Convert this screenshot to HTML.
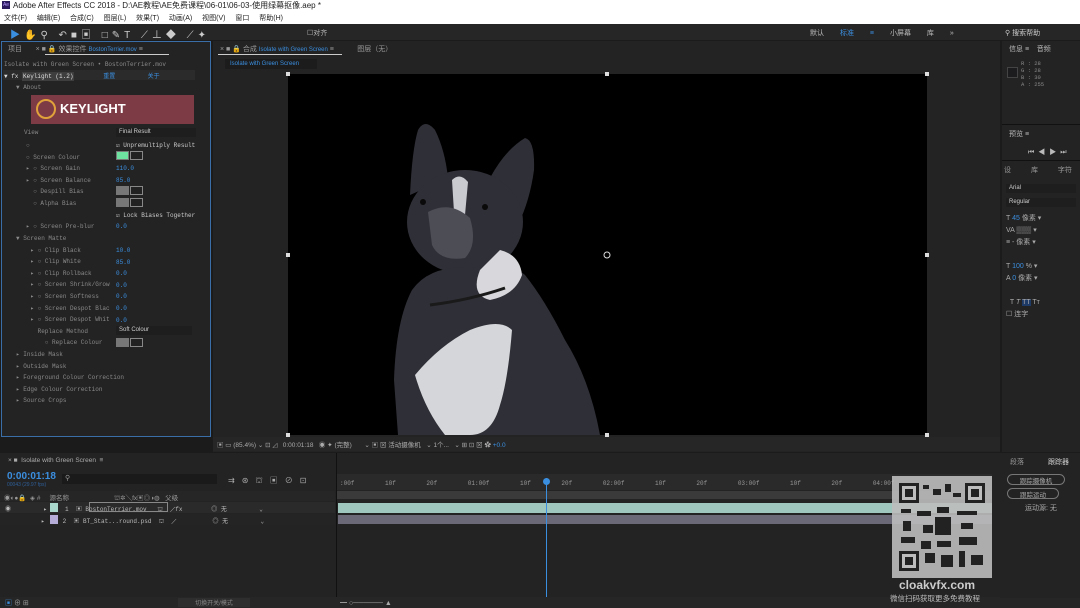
<!DOCTYPE html>
<html><head><meta charset="utf-8">
<style>
*{margin:0;padding:0;box-sizing:border-box}
body{width:1080px;height:608px;overflow:hidden;background:#1b1b1b;font-family:"Liberation Sans","Noto Sans CJK SC",sans-serif;font-size:7px;color:#9a9a9a;position:relative}
.a{position:absolute}
.m{font-family:"Liberation Mono","Noto Sans CJK SC",monospace;font-size:6px;color:#8a8a8a;white-space:nowrap}
.b{color:#3b8fe0}
.sw{width:13px;height:9px;border:1px solid #777}
.ey{width:13px;height:9px;background:#222;border:1px solid #888}
.dd{background:#1e1e1e;color:#ccc;height:9px;font-size:6px;padding-left:3px;line-height:9px}
</style></head><body>
<div class="a" style="left:0;top:0;width:1080px;height:24px;background:#fff"></div>
<div class="a" style="left:2px;top:1px;width:8px;height:8px;background:#2b1a5e;color:#b79bff;font-size:5px;line-height:8px;text-align:center">Ae</div>
<div class="a" style="left:13px;top:0;font-size:8px;color:#222;white-space:nowrap">Adobe After Effects CC 2018 - D:\AE教程\AE免费课程\06-01\06-03-使用绿幕抠像.aep *</div>
<div class="a" style="left:4px;top:13px;font-size:7px;color:#222;white-space:nowrap;word-spacing:3px">文件(F) &nbsp;编辑(E) &nbsp;合成(C) &nbsp;图层(L) &nbsp;效果(T) &nbsp;动画(A) &nbsp;视图(V) &nbsp;窗口 &nbsp;帮助(H)</div>
<div class="a" style="left:0;top:24px;width:1080px;height:16px;background:#262626"></div>
<div class="a" style="left:10px;top:26px;font-size:10px;color:#ccc;white-space:nowrap;letter-spacing:4px"><span style="color:#3b8fe0">▶</span>✋⚲ ↶■▣ □✎T ⟋⊥◆ ⟋✦</div>
<div class="a" style="left:307px;top:28px;font-size:7px;color:#bbb">☐对齐</div>
<div class="a" style="left:810px;top:28px;font-size:7px;color:#bbb;white-space:nowrap;word-spacing:14px">默认 <span class="b">标准</span> <span class="b">≡</span> 小屏幕 库 »</div>
<div class="a" style="left:1005px;top:28px;font-size:7px;color:#ccc">⚲ 搜索帮助</div>
<div class="a" style="left:1px;top:41px;width:210px;height:396px;background:#232323;border:1px solid #3a6ea8"></div>
<div class="a" style="left:8px;top:44px;font-size:7px;color:#999;white-space:nowrap">项目 &nbsp; &nbsp; &nbsp; × ■ 🔒 效果控件 <span class="b" style="font-size:6px">BostonTerrier.mov</span> ≡</div>
<div class="a" style="left:45px;top:54px;width:124px;height:1px;background:#ccc"></div>
<div class="a m" style="left:4px;top:61px">Isolate with Green Screen • BostonTerrier.mov</div>
<div class="a" style="left:3px;top:70px;width:192px;height:10px;background:#2b2b2b"></div>
<div class="a m" style="left:4px;top:71px;color:#ddd">▼ fx <span style="background:#3e3e3e;padding:1px">Keylight (1.2)</span> &nbsp; &nbsp; &nbsp; &nbsp;<span class="b">重置</span> &nbsp; &nbsp; &nbsp; &nbsp; <span class="b">关于</span></div>
<div class="a m" style="left:16px;top:84px">▼ About</div>
<div class="a" style="left:31px;top:95px;width:163px;height:29px;background:#7d3b45"></div>
<div class="a" style="left:36px;top:99px;width:20px;height:20px;border:2px solid #e0a23a;border-radius:50%"></div>
<div class="a" style="left:60px;top:101px;font-size:13px;font-weight:bold;color:#fff">KEYLIGHT</div>
<div class="a m" style="left:24px;top:129px">View</div>
<div class="a dd" style="left:116px;top:128px;width:80px">Final Result</div>
<div class="a m" style="left:26px;top:140px;line-height:11.6px">
○<br>○ Screen Colour<br>▸ ○ Screen Gain<br>▸ ○ Screen Balance<br>&nbsp; ○ Despill Bias<br>&nbsp; ○ Alpha Bias<br><br>▸ ○ Screen Pre-blur<br></div>
<div class="a m" style="left:116px;top:140px;line-height:11.6px"><span style="color:#ccc">☑ Unpremultiply Result</span><br><br><span class="b">110.0</span><br><span class="b">85.0</span><br><br><br><span style="color:#ccc">☑ Lock Biases Together</span><br><span class="b">0.0</span></div>
<div class="a sw" style="left:116px;top:151px;background:#6ee0a0"></div><div class="a ey" style="left:130px;top:151px"></div>
<div class="a sw" style="left:116px;top:186px;background:#777"></div><div class="a ey" style="left:130px;top:186px"></div>
<div class="a sw" style="left:116px;top:198px;background:#777"></div><div class="a ey" style="left:130px;top:198px"></div>
<div class="a m" style="left:16px;top:233px;line-height:11.6px">▼ Screen Matte<br>&nbsp; &nbsp; ▸ ○ Clip Black<br>&nbsp; &nbsp; ▸ ○ Clip White<br>&nbsp; &nbsp; ▸ ○ Clip Rollback<br>&nbsp; &nbsp; ▸ ○ Screen Shrink/Grow<br>&nbsp; &nbsp; ▸ ○ Screen Softness<br>&nbsp; &nbsp; ▸ ○ Screen Despot Blac<br>&nbsp; &nbsp; ▸ ○ Screen Despot Whit<br>&nbsp; &nbsp; &nbsp; Replace Method<br>&nbsp; &nbsp; &nbsp; &nbsp; ○ Replace Colour<br>▸ Inside Mask<br>▸ Outside Mask<br>▸ Foreground Colour Correction<br>▸ Edge Colour Correction<br>▸ Source Crops</div>
<div class="a m b" style="left:116px;top:245px;line-height:11.6px">10.0<br>85.0<br>0.0<br>0.0<br>0.0<br>0.0<br>0.0</div>
<div class="a dd" style="left:116px;top:326px;width:76px">Soft Colour</div>
<div class="a sw" style="left:116px;top:338px;background:#777"></div><div class="a ey" style="left:130px;top:338px"></div>
<div class="a" style="left:213px;top:41px;width:787px;height:411px;background:#232323"></div>
<div class="a" style="left:220px;top:44px;font-size:7px;color:#999;white-space:nowrap">× ■ 🔒 合成 <span class="b" style="font-size:6px">Isolate with Green Screen</span> ≡ &nbsp; &nbsp; &nbsp; &nbsp; &nbsp; &nbsp;图层（无）</div>
<div class="a" style="left:218px;top:54px;width:124px;height:1px;background:#ccc"></div>
<div class="a" style="left:225px;top:59px;width:92px;height:10px;background:#1c1c1c;font-size:6px;color:#3b8fe0;padding:2px 0 0 5px">Isolate with Green Screen</div>
<div class="a" style="left:288px;top:74px;width:639px;height:361px;background:#000"></div>
<svg class="a" style="left:0;top:0" width="1080" height="608">
<g fill="#ddd"><rect x="286" y="72" width="4" height="4"/><rect x="605" y="72" width="4" height="4"/><rect x="925" y="72" width="4" height="4"/><rect x="286" y="253" width="4" height="4"/><rect x="925" y="253" width="4" height="4"/><rect x="286" y="433" width="4" height="4"/><rect x="605" y="433" width="4" height="4"/><rect x="925" y="433" width="4" height="4"/></g>
<circle cx="607" cy="255" r="3" fill="none" stroke="#ddd"/>
<g fill="#2f2f37">
<path d="M410 195 Q412 150 418 130 Q425 118 435 130 Q445 150 448 178 Z"/>
<path d="M490 178 Q505 150 525 138 Q535 140 534 170 Q530 200 518 225 Z"/>
<ellipse cx="465" cy="222" rx="58" ry="52"/>
<path d="M398 435 L394 380 Q396 320 412 290 Q430 265 470 268 Q515 265 525 275 Q545 300 565 340 Q590 380 600 435 Z"/>
</g>
<path d="M452 180 Q460 172 468 182 L465 215 Q458 228 454 212 Z" fill="#c9c9d0"/>
<path d="M428 212 Q450 200 470 218 Q478 245 465 258 Q440 262 432 245 Z" fill="#4d4d56"/>
<path d="M500 250 Q520 255 522 275 Q515 295 490 300 Q470 295 480 270 Z" fill="#d8d8dc"/>
<path d="M415 375 Q440 345 470 330 Q500 318 512 330 Q508 380 500 405 Q492 435 470 435 L445 435 Q425 410 415 375Z" fill="#d4d6da"/>
<circle cx="423" cy="202" r="3" fill="#0a0a0a"/><circle cx="485" cy="207" r="3" fill="#0a0a0a"/>
<path d="M430 305 Q470 300 505 288" stroke="#1a1a1a" stroke-width="3" fill="none"/>
</svg>
<div class="a" style="left:213px;top:437px;width:787px;height:14px;background:#262626"></div>
<div class="a" style="left:217px;top:439px;font-size:6.5px;color:#aaa;white-space:nowrap">▣ ▭ (85.4%) ⌄ ⊡ ◿ &nbsp; 0:00:01:18 &nbsp; ◉ ✦ (完整) &nbsp; &nbsp; &nbsp; ⌄ ▣ ⊠ 活动摄像机 &nbsp; ⌄ 1个... &nbsp; ⌄ ⊞ ⊡ ⊠ ✿ <span class="b">+0.0</span></div>
<div class="a" style="left:1002px;top:41px;width:78px;height:411px;background:#232323"></div>
<div class="a" style="left:1009px;top:44px;font-size:7px;color:#bbb;white-space:nowrap">信息 ≡ &nbsp; &nbsp;音频</div>
<div class="a" style="left:1007px;top:67px;width:11px;height:11px;background:#1c1c1e;border:1px solid #444"></div>
<div class="a m" style="left:1021px;top:60px;line-height:7px;font-size:5.5px">R : 28<br>G : 28<br>B : 30<br>A : 255</div>
<div class="a" style="left:1002px;top:124px;width:78px;height:1px;background:#111"></div>
<div class="a" style="left:1009px;top:129px;font-size:7px;color:#bbb">预览 ≡</div>
<div class="a" style="left:1028px;top:147px;font-size:7px;color:#bbb;letter-spacing:4px">⏮◀▶⏭</div>
<div class="a" style="left:1002px;top:160px;width:78px;height:1px;background:#111"></div>
<div class="a" style="left:1004px;top:165px;font-size:7px;color:#999;word-spacing:18px">设 库 字符</div>
<div class="a dd" style="left:1006px;top:184px;width:70px">Arial</div>
<div class="a dd" style="left:1006px;top:198px;width:70px">Regular</div>
<div class="a" style="left:1006px;top:213px;font-size:7px;color:#aaa;line-height:12px;white-space:nowrap">T <span class="b">45</span> 像素 ▾<br>VA ▒▒▒ ▾<br>≡ - 像素 ▾<br><br>T <span class="b">100</span> % ▾<br>A <span class="b">0</span> 像素 ▾<br><br>&nbsp; T <i>T</i> <span style="background:#1e3a66">TT</span> Tт<br>☐ 连字</div>
<div class="a" style="left:0;top:453px;width:1080px;height:155px;background:#232323"></div>
<div class="a" style="left:8px;top:457px;font-size:6.5px;color:#aaa">× ■ &nbsp;Isolate with Green Screen &nbsp;≡</div>
<div class="a" style="left:7px;top:471px;font-size:10px;color:#3b8fe0;font-weight:bold">0:00:01:18</div>
<div class="a" style="left:7px;top:482px;font-size:5px;color:#2e5f99">00043 (29.97 fps)</div>
<div class="a" style="left:62px;top:474px;width:155px;height:10px;background:#1a1a1a;font-size:7px;padding-left:3px">⚲</div>
<div class="a" style="left:228px;top:475px;font-size:8px;color:#aaa;letter-spacing:7px">⇉⊛⛫▣⊘⊡</div>
<div class="a" style="left:0;top:491px;width:335px;height:10px;background:#262626"></div>
<div class="a" style="left:4px;top:492px;font-size:6.5px;color:#999;white-space:nowrap">◉◐●🔒 &nbsp;◈ # &nbsp; &nbsp; 源名称 &nbsp; &nbsp; &nbsp; &nbsp; &nbsp; &nbsp; &nbsp; &nbsp; &nbsp; &nbsp; &nbsp; &nbsp; ⛫✲╲fx▣◎◑◍ &nbsp; 父级</div>
<div class="a" style="left:0;top:502px;width:335px;height:11px;background:#2a2a2a"></div>
<div class="a" style="left:0;top:514px;width:335px;height:11px;background:#242424"></div>
<div class="a" style="left:50px;top:503px;width:8px;height:9px;background:#a9d7cc"></div>
<div class="a" style="left:50px;top:515px;width:8px;height:9px;background:#b5acd8"></div>
<div class="a" style="left:89px;top:502px;width:79px;height:10px;border:1px solid #888"></div>
<div class="a m" style="left:5px;top:504px;line-height:12px;color:#bbb">◉ &nbsp; &nbsp; &nbsp; &nbsp; ▸ &nbsp; &nbsp; 1 &nbsp;▣ BostonTerrier.mov &nbsp; ⛫ &nbsp;⟋fx &nbsp; &nbsp; &nbsp; &nbsp;◎ 无 &nbsp; &nbsp; &nbsp; &nbsp; ⌄<br>&nbsp; &nbsp; &nbsp; &nbsp; &nbsp; ▸ &nbsp; &nbsp; 2 &nbsp;▣ BT_Stat...round.psd &nbsp;⛫ &nbsp;⟋ &nbsp; &nbsp; &nbsp; &nbsp; &nbsp;◎ 无 &nbsp; &nbsp; &nbsp; &nbsp; ⌄</div>
<div class="a" style="left:336px;top:453px;width:1px;height:145px;background:#111"></div>
<div class="a" style="left:337px;top:474px;width:655px;height:16px;background:#2a2a2a"></div>
<div class="a m" style="left:340px;top:480px;word-spacing:27px;color:#999">:00f 10f 20f 01:00f 10f 20f 02:00f 10f 20f 03:00f 10f 20f 04:00f</div>
<div class="a" style="left:337px;top:491px;width:655px;height:8px;background:#3a3a3a"></div>
<div class="a" style="left:338px;top:503px;width:654px;height:10px;background:#9fc7bd"></div>
<div class="a" style="left:338px;top:515px;width:654px;height:9px;background:#6b6877"></div>
<div class="a" style="left:546px;top:478px;width:1px;height:120px;background:#3b8fe0"></div>
<div class="a" style="left:543px;top:478px;width:7px;height:7px;background:#3b8fe0;border-radius:50%"></div>
<div class="a" style="left:0;top:597px;width:1080px;height:11px;background:#262626"></div>
<div class="a" style="left:5px;top:598px;font-size:7px;color:#3b8fe0">▣ <span style="color:#999">⊕ ⊞</span></div>
<div class="a" style="left:178px;top:598px;width:72px;height:9px;background:#2e2e2e;font-size:6px;color:#888;text-align:center">切换开关/模式</div>
<div class="a" style="left:340px;top:598px;font-size:7px;color:#aaa">━ ○────── ▲</div>
<div class="a" style="left:1000px;top:453px;width:80px;height:145px;background:#232323"></div>
<div class="a" style="left:1010px;top:457px;font-size:7px;color:#999;word-spacing:22px">段落 <span style="color:#ccc">跟踪器</span></div>
<div class="a" style="left:1007px;top:474px;width:58px;height:11px;border:1px solid #777;border-radius:6px;font-size:6.5px;color:#aaa;text-align:center">跟踪摄像机</div>
<div class="a" style="left:1007px;top:488px;width:52px;height:11px;border:1px solid #777;border-radius:6px;font-size:6.5px;color:#aaa;text-align:center">跟踪运动</div>
<div class="a" style="left:1025px;top:503px;font-size:7px;color:#aaa">运动源: 无</div>
<div class="a" style="left:892px;top:476px;width:100px;height:102px;background:#bdbdbd;opacity:.9"></div>
<svg class="a" style="left:897px;top:481px" width="90" height="92"><g fill="#222">
<rect x="2" y="2" width="20" height="20"/><rect x="68" y="2" width="20" height="20"/><rect x="2" y="70" width="20" height="20"/>
<rect x="26" y="4" width="6" height="4"/><rect x="36" y="8" width="8" height="6"/><rect x="48" y="3" width="6" height="8"/><rect x="56" y="12" width="8" height="4"/>
<rect x="4" y="28" width="10" height="4"/><rect x="20" y="30" width="14" height="5"/><rect x="40" y="26" width="12" height="6"/><rect x="60" y="30" width="20" height="4"/>
<rect x="6" y="40" width="8" height="10"/><rect x="26" y="44" width="10" height="8"/><rect x="38" y="36" width="16" height="18"/><rect x="64" y="42" width="12" height="6"/>
<rect x="4" y="56" width="14" height="6"/><rect x="24" y="60" width="10" height="8"/><rect x="40" y="60" width="14" height="6"/><rect x="62" y="56" width="18" height="8"/>
<rect x="28" y="72" width="10" height="10"/><rect x="44" y="74" width="12" height="12"/><rect x="62" y="70" width="6" height="16"/><rect x="74" y="74" width="12" height="10"/>
</g><g fill="#bdbdbd"><rect x="5" y="5" width="14" height="14"/><rect x="71" y="5" width="14" height="14"/><rect x="5" y="73" width="14" height="14"/></g>
<g fill="#222"><rect x="8" y="8" width="8" height="8"/><rect x="74" y="8" width="8" height="8"/><rect x="8" y="76" width="8" height="8"/></g></svg>
<div class="a" style="left:899px;top:578px;font-size:12px;font-weight:bold;color:#ccc">cloakvfx.com</div>
<div class="a" style="left:890px;top:593px;font-size:7.5px;color:#bbb;white-space:nowrap">微信扫码获取更多免费教程</div>
</body></html>
